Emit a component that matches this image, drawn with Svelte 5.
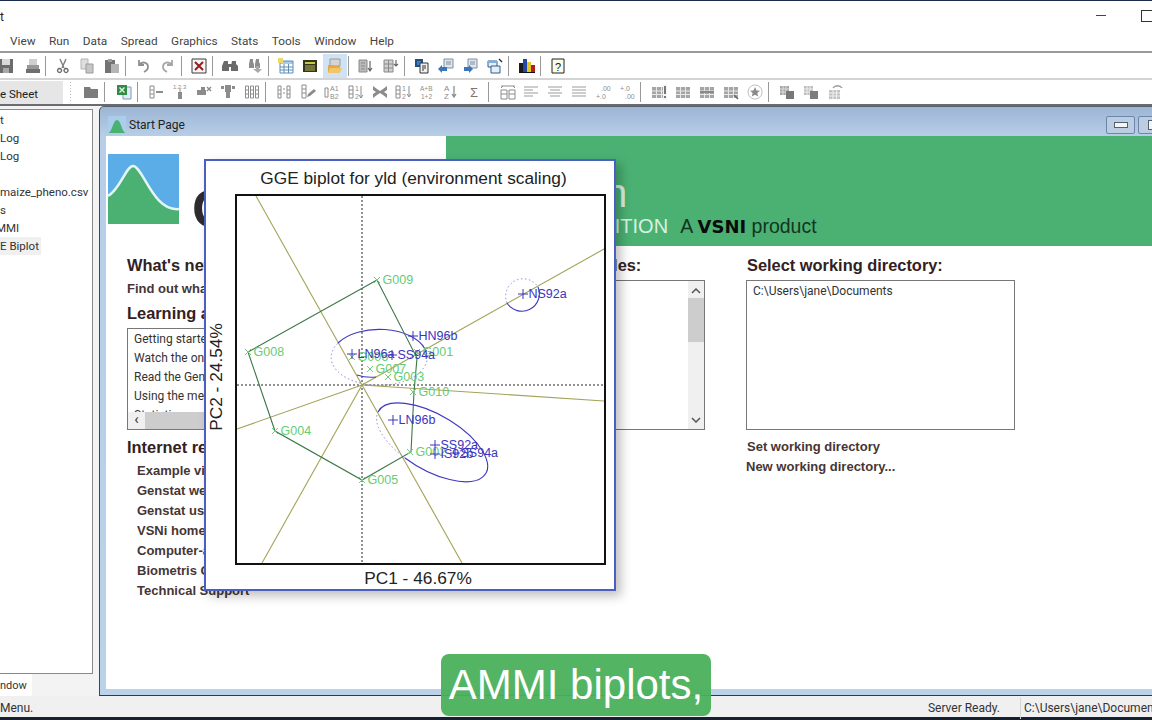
<script>
  const menus = ['View', 'Run', 'Data', 'Spread', 'Graphics', 'Stats', 'Tools', 'Window', 'Help'];
  const tree = ['t', 'Log', 'Log', '', 'maize_pheno.csv', 's', 'MMI', 'E Biplot'];
  const learning = ['Getting started', 'Watch the online videos', 'Read the Genstat guides', 'Using the menus', 'Statistics'];
  const resources = ['Example videos', 'Genstat website', 'Genstat user forum', 'VSNi home page', 'Computer-aided design', 'Biometris Genstat', 'Technical Support'];

  // little helpers for the toolbar glyphs (16x16 box)
  const f = (c, d) => ({ c, d, fill: true });
  const s = (c, d, w = 1) => ({ c, d, w });
  const t = (c, str, x, y, size) => ({ c, str, x, y, size });
  const G = '#8c8c8c';
  const L = '#bdbdbd';
  const sheet = [f('#a5a5a5', 'M1 3h14v11H1z'), s('#e8e8e8', 'M1 7h14M1 10.500h14M5.500 3v11M10.500 3v11')];

  const icons = {
    save: [f('#6c6c6c', 'M0 1h14v14H0z'), f('#d9d9d9', 'M3 1h8v6H3z'), f('#a9a9a9', 'M4 10h6v5H4z')],
    print: [f('#cfcfcf', 'M5 1h8v6H5z'), f('#979797', 'M3 7h12v5H3z'), f('#6f6f6f', 'M2 11h14v4H2z')],
    cut: [s('#7d7d7d', 'M5 1l4 9M11 1l-4 9', 1.4), s('#6a6a6a', 'M4.500 10.500a2 2 0 1 0 .1 0zM11 10.500a2 2 0 1 0 .1 0z', 1.4)],
    copy: [f('#dedede', 'M2 1h7v10H2z'), s('#b5b5b5', 'M2 1h7v10H2z'), f('#c6c6c6', 'M7 6h7v9H7z'), s('#9a9a9a', 'M7 6h7v9H7z')],
    paste: [f('#747474', 'M1 2h10v13H1z'), f('#9c9c9c', 'M4 1h4v3H4z'), f('#b5b5b5', 'M7 6h8v9H7z')],
    undo: [s('#8f8f8f', 'M4 2v5h5M4 7c3-4 9-3 9 2 0 3-2 4-4 5', 1.8)],
    redo: [s('#a5a5a5', 'M12 2v5H7M12 7C9 3 3 4 3 9c0 3 2 4 4 5', 1.8)],
    close: [f('#f6f6f6', 'M1 1h14v14H1z'), s('#3a3a3a', 'M1 1h14v14H1z'), s('#9b1b1b', 'M4 4l8 8M12 4l-8 8', 2)],
    binoc: [f('#6b6b6b', 'M2 3h4v3l1 2v5H0V8zM10 3h4v3l2 2v5H9V8zM6 6h4v3H6z')],
    findnext: [f('#8d8d8d', 'M3 1h3v3l1 2v4H2V6zM9 1h3v3l1 2v4H8V6z'), f('#a9a9a9', 'M9 8h3v3h3l-4 4-5-4h3z')],
    newsheet: [f('#fff', 'M2 3h13v12H2z'), f('#a7cbe8', 'M2 3h13v3H2z'), s('#5d8db5', 'M2 3h13v12H2zM2 9h13M2 12h13M6 6v9M10.500 6v9'), f('#ecd771', 'M0 0h5v5H0z')],
    calc: [f('#34341a', 'M1 2h14v12H1z'), f('#c7c84c', 'M3 4h10v2H3z'), s('#b5b65a', 'M3 8h10M3 10h10M3 12h10', 1)],
    open: [f('#d5d5d5', 'M3 1h10v7H3z'), s('#9a9a9a', 'M3 1h10v7H3z'), f('#e2a94a', 'M1 7h5l1 1h6v7H1z'), f('#f4c568', 'M3 10h12l-2 5H1z')],
    down1: [f('#bbb', 'M1 2h8v12H1z'), s('#8a8a8a', 'M1 2h8v12H1zM3 5h4M3 8h4M3 11h4'), s('#666', 'M12 3v10M10 10l2 3 2-3', 1.2)],
    down2: [f('#d0d0d0', 'M1 2h9v12H1z'), s('#8a8a8a', 'M1 2h9v12H1zM5.500 2v12M1 6h9M1 10h9'), s('#666', 'M13 2v6M11 6l2 2 2-2', 1.2)],
    gen: [f('#1f4f86', 'M1 1h8v8H1z'), f('#3f7fbf', 'M3 3h4v4H3z'), f('#f0f0f0', 'M6 5h8v10H6z'), s('#333', 'M6 5h8v10H6zM8 8h4M8 10h4M8 12h2')],
    back: [f('#dfe6ee', 'M6 1h9v9H6z'), s('#7e8ea0', 'M6 1h9v9H6zM8 4h5M8 6h5'), f('#3a76b8', 'M0 11l4-4v2h5v4H4v2z')],
    fwd: [f('#dfe6ee', 'M5 1h9v9H5z'), s('#7e8ea0', 'M5 1h9v9H5zM7 4h5M7 6h5'), f('#3a76b8', 'M10 11L6 7v2H1v4h5v2z')],
    windows: [f('#e6eef6', 'M1 3h9v6H1z'), s('#2c5e92', 'M1 3h9v6H1z'), f('#7fb0dd', 'M1 3h9v2H1z'), f('#e6eef6', 'M4 8h9v7H4z'), s('#2c5e92', 'M4 8h9v7H4z'), s('#222', 'M12 1l3 3', 1.2)],
    chart: [f('#1c1c1c', 'M0 5h4v10H0z'), f('#2247a8', 'M4 1h4v14H4z'), f('#e3c61e', 'M8 4h4v11H8z'), f('#b3201c', 'M12 7h4v8h-4z'), f('#111', 'M0 14h16v1H0z')],
    help: [f('#fbfbe8', 'M2 1h12v14H2z'), s('#222', 'M2 1h12v14H2z'), t('#111', '?', 5, 12.500, 11)],
    folder: [f('#7c7c7c', 'M1 3h6l1 2h7v9H1z')],
    excel: [f('#e4edf6', 'M7 3h8v12H7z'), s('#7d9ab8', 'M7 3h8v12H7z'), f('#2f8d43', 'M1 1h10v10H1z'), s('#e8f3e8', 'M3.500 3.500l5 5M8.500 3.500l-5 5', 1.4)],
    inscol: [s(G, 'M2 2h4v12H2zM2 6h4M2 10h4'), s(G, 'M8 8h7', 2)],
    numrow: [t(G, '1.2.3', 1, 5, 6), f(G, 'M6 8h4v7H6z'), s(G, 'M8 5v3')],
    delcol: [f(G, 'M1 6h9v5H1zM5 3h4v3H5z'), s(G, 'M11 3l4 4M15 3l-4 4', 1.4)],
    delrow: [f(G, 'M5 1h6v7H5zM1 2h3v3H1zM12 2h3v3h-3zM6 8h4v6H6z')],
    cols: [s(G, 'M1.500 2h3v12h-3zM6.500 2h3v12h-3zM11.500 2h3v12h-3zM1.500 6h3M6.500 6h3M11.500 6h3M1.500 10h3M6.500 10h3M11.500 10h3')],
    split: [s(G, 'M2 2h3v12H2zM11 2h3v12h-3zM2 6h3M11 6h3M2 10h3M11 10h3M7 5h2M7 9h2')],
    edit: [s(G, 'M2 1h4v13H2zM2 5h4M2 9h4'), f(G, 'M7 13l1-3 6-5 2 2-6 5z')],
    a1b2: [s(G, 'M1 4h3v9H1z'), t(G, 'A1', 6, 7, 7), t(G, 'B2', 6, 15, 7)],
    sort12: [s(G, 'M1 2h4v12H1zM1 6h4M1 10h4'), t(G, '1', 7, 7, 7), t(G, '2', 7, 15, 7), s(G, 'M13 2v12M11 11l2 3 2-3')],
    cross: [f(G, 'M1 2l4 3 3 2 3-2 4-3v4l-3 2 3 2v4l-4-3-3-2-3 2-4 3v-4l3-2-3-2z')],
    sort21: [s(G, 'M1 2h4v12H1zM1 6h4M1 10h4'), t(G, '1', 7, 7, 7), t(G, '2', 7, 15, 7), s(G, 'M14 2v10M12 10l2 3 2-3')],
    aplusb: [t(G, 'A+B', 1, 7, 6.500), t(G, '1+2', 2, 15, 6.500)],
    az: [t(G, 'A', 1, 7, 8), t(G, 'Z', 1, 15, 8), s(G, 'M11 2v11M9 10l2 3 2-3', 1.3)],
    sigma: [t('#777', 'Σ', 3, 13, 13)],
    hdr: [s(G, 'M1 2h14M1 4l2-2M15 4l-2-2'), s(G, 'M1 6h6v9H1zM9 6h6v9H9zM1 10h6M9 10h6')],
    left: [s(L, 'M1 3h14M1 6h9M1 9h14M1 12h9', 1.5)],
    center: [s(L, 'M1 3h14M3 6h10M1 9h14M3 12h10', 1.5)],
    right: [s(L, 'M1 3h14M1 6h14M1 9h14M1 12h14', 1.5)],
    decup: [t(G, '.00', 6, 7, 7), t(G, '+.0', 1, 15, 7)],
    decdown: [t(G, '+.0', 1, 7, 7), t(G, '.00', 6, 15, 7)],
    warn: [...sheet, f('#f6f6f6', 'M12 0h4v16h-4z'), f('#777', 'M13 2h2v8h-2zM13 12h2v2h-2z')],
    sheet,
    sheet2: [...sheet, f('#8a8a8a', 'M1 7h14v2H1z')],
    sheetq: [...sheet, s('#666', 'M11 11l4 4', 1.5)],
    star: [s(L, 'M8 1a7 7 0 1 0 .1 0z', 1), f('#8a8a8a', 'M8 3l1.500 3.500 3.500.3-2.700 2.300.9 3.500L8 10.700 4.800 12.600l.9-3.500L3 6.800l3.500-.3z')],
    cp1: [f('#a5a5a5', 'M1 2h9v9H1z'), s('#ddd', 'M1 5h9M1 8h9M4 2v9M7 2v9'), f('#777', 'M7 7h8v8H7z')],
    cp2: [f('#bdbdbd', 'M1 2h9v9H1z'), s('#eee', 'M1 5h9M1 8h9M4 2v9M7 2v9'), f('#7d7d7d', 'M7 7h8v8H7z')],
    cp3: [f('#c2c2c2', 'M2 6h11v9H2z'), s('#efefef', 'M2 9h11M2 12h11M6 6v9M9.500 6v9'), s('#999', 'M6 4c2-3 7-3 9 0', 1.3)]
  };

  // '|' is a separator
  const bar1 = ['save', 'print', '|', 'cut', 'copy', 'paste', '|', 'undo', 'redo', '|', 'close', '|', 'binoc', 'findnext', '|', 'newsheet', 'calc', 'open', '|', 'down1', 'down2', '|', 'gen', 'back', 'fwd', 'windows', '|', 'chart', '|', 'help'];
  const bar2 = ['folder', '|', 'excel', '|', 'inscol', 'numrow', 'delcol', 'delrow', 'cols', '|', 'split', 'edit', 'a1b2', 'sort12', 'cross', 'sort21', 'aplusb', 'az', 'sigma', '|', 'hdr', 'left', 'center', 'right', 'decup', 'decdown', '|', 'warn', 'sheet', 'sheet2', 'sheetq', 'star', '|', 'cp1', 'cp2', 'cp3'];

  // biplot, all in page coordinates
  const rays = [[256, 196], [604, 249], [604, 401], [462, 563], [262, 563], [237, 429]];
  const hull = '377,280 248,352 275,431 362,480 411,452 414,392 417,358';
  const greens = [
    ['G009', 377, 280], ['G008', 248, 352], ['G004', 275, 431], ['G005', 362, 480], ['G001', 417, 352],
    ['G006', 352, 357], ['G007', 370, 369], ['G003', 388, 377], ['G010', 413, 392], ['G002', 410, 452]
  ];
  const blues = [
    ['NS92a', 523, 294], ['HN96b', 413, 336], ['LN96a', 352, 354], ['SS94a', 392, 355],
    ['LN96b', 393, 420], ['SS92a', 435, 445], ['IS92b', 435, 454], ['SS94a', 455, 453]
  ];
</script>

{#snippet toolbar(items)}
  {#each items as name}
    {#if name === '|'}
      <span class="sep"></span>
    {:else}
      <span class="tool" class:active={name === 'open'}>
        <svg width="16" height="16" viewBox="0 0 16 16">
          {#each icons[name] as p}
            {#if p.str}
              <text x={p.x} y={p.y} font-size={p.size} fill={p.c} font-family="Liberation Sans, sans-serif">{p.str}</text>
            {:else if p.fill}
              <path d={p.d} fill={p.c} />
            {:else}
              <path d={p.d} fill="none" stroke={p.c} stroke-width={p.w} />
            {/if}
          {/each}
        </svg>
      </span>
    {/if}
  {/each}
{/snippet}

<div class="app">
  <div class="titlebar">
    <span>t</span>
    <span class="min"></span>
    <span class="max"></span>
  </div>

  <nav class="menubar">
    {#each menus as m}<span>{m}</span>{/each}
  </nav>

  <div class="bar bar1">{@render toolbar(bar1)}</div>

  <div class="bar bar2">
    <div class="sheet-tab">e Sheet</div>
    <span class="grip"></span>
    {@render toolbar(bar2)}
  </div>

  <div class="workspace">
    <aside class="side">
      <ul class="tree">
        {#each tree as item}
          <li><span class:selected={item === 'E Biplot'} class:clipped={item === 'MMI'}>{item}</span></li>
        {/each}
      </ul>
      <div class="side-tab">ndow</div>
    </aside>

    <section class="mdi">
      <header class="mdi-title">
        <svg width="18" height="18" viewBox="0 0 18 18">
          <path d="M0 0h18v18H0z" fill="#a9cdea" />
          <path d="M0 17c4 0 5-13 9-13s5 13 9 13z" fill="#4bb173" />
        </svg>
        <span>Start Page</span>
        <div class="mdi-buttons">
          <button aria-label="minimise"><i></i></button>
          <button aria-label="maximise"><i class="sq"></i></button>
        </div>
      </header>

      <div class="page">
        <div class="banner">
          <div class="brand">
            <svg width="71" height="70" viewBox="0 0 71 70">
              <path d="M0 0h71v70H0z" fill="#5aade6" />
              <path d="M0 42C12 36 18 12 25 12c10 0 20 46 46 43v15H0z" fill="#4bb173" />
              <path d="M0 42C12 36 18 12 25 12c10 0 20 46 46 43" fill="none" stroke="#e4f6f4" stroke-width="2.500" />
            </svg>
            <span class="logo-word">G</span>
          </div>
          <div class="green">
            <div class="big">n</div>
            <div class="edition">
              <span class="ed">EDITION</span>
              <span class="vsni">A <b>VSNI</b> product</span>
            </div>
          </div>
        </div>

        <div class="cols">
          <div class="col-left">
            <h2>What's new</h2>
            <a class="first" href="#new">Find out what's new</a>
            <h2 class="learn">Learning about Genstat</h2>
            <div class="listbox short">
              <ul>
                {#each learning as row}<li>{row}</li>{/each}
              </ul>
              <div class="hscroll"><span class="chev">‹</span><span class="hthumb"></span></div>
            </div>
            <h2 class="internet">Internet resources</h2>
            <div class="links">
              {#each resources as r}<a href="#r">{r}</a>{/each}
            </div>
          </div>

          <div class="col-mid">
            <h2>Select recently used files:</h2>
            <div class="listbox tall">
              <div class="vscroll">
                <svg class="up" width="10" height="6" viewBox="0 0 10 6"><path d="M1 5l4-4 4 4" fill="none" stroke="#555" stroke-width="1.500" /></svg>
                <span class="vthumb"></span>
                <svg class="down" width="10" height="6" viewBox="0 0 10 6"><path d="M1 1l4 4 4-4" fill="none" stroke="#555" stroke-width="1.500" /></svg>
              </div>
            </div>
          </div>

          <div class="col-right">
            <h2>Select working directory:</h2>
            <div class="listbox tall dir">C:\Users\jane\Documents</div>
            <div class="dir-links">
              <a href="#set">Set working directory</a>
              <a class="nudge" href="#nw">New working directory...</a>
            </div>
          </div>
        </div>
      </div>
    </section>
  </div>

  <footer class="status">
    <span>Menu.</span>
    <span class="ready">Server Ready.</span>
    <span class="path">C:\Users\jane\Documents</span>
  </footer>

  <div class="popup">
    <svg width="408" height="428" viewBox="206 161 408 428">
      <text class="lab" x="413.500" y="184" font-size="17.300" text-anchor="middle" fill="#222">GGE biplot for yld (environment scaling)</text>
      <text class="lab" x="418" y="584" font-size="17.300" text-anchor="middle" fill="#222">PC1 - 46.67%</text>
      <text class="lab" x="222" y="377" font-size="17.300" text-anchor="middle" fill="#222" transform="rotate(-90 222 377)">PC2 - 24.54%</text>

      <path d="M362 196V563M237 385H604" stroke="#222" stroke-dasharray="2 2" fill="none" />
      {#each rays as r}
        <line x1="362" y1="385" x2={r[0]} y2={r[1]} stroke="#a3a35a" stroke-width="1.100" />
      {/each}
      <polygon points={hull} fill="none" stroke="#3c7748" stroke-width="1.100" />

      <!-- concentration ellipses: solid on the far side of the ray -->
      <g fill="none" stroke="#4038c0" stroke-width="1.100">
        <path d="M507 303A17.500 17.500 0 0 0 538 287" />
        <path d="M338 343A48 28 0 0 1 425 349" />
        <path d="M357 375Q366 378 376 377" />
        <path d="M378 412A62 28 30 1 1 405 458" />
      </g>
      <g fill="none" stroke="#8e8ac8" stroke-width="1" stroke-dasharray="1.500 2.500">
        <path d="M507 303A17.500 17.500 0 0 1 538 287" />
        <path d="M425 349A48 28 0 1 1 338 343" />
        <path d="M405 458A62 28 30 0 1 378 412" />
      </g>

      {#each greens as g}
        <path d="M{g[1] - 3} {g[2] - 3}l6 6m0-6l-6 6" stroke="#6fcf7e" fill="none" />
        <text class="lab" x={g[1] + 5.500} y={g[2] + 3.500} font-size="12.500" fill="#66cc76">{g[0]}</text>
      {/each}
      {#each blues as b}
        <path d="M{b[1] - 5} {b[2]}h10m-5-5v10" stroke="#3a34be" fill="none" />
        <text class="lab" x={b[1] + 5.500} y={b[2] + 3.500} font-size="12.500" fill="#3a34be">{b[0]}</text>
      {/each}

      <rect x="236" y="195" width="369" height="369" fill="none" stroke="#111" stroke-width="2" />
    </svg>
  </div>

  <div class="caption">AMMI biplots,</div>
</div>

<style>
  :global(body) {
    margin: 0;
  }
  .app {
    position: relative;
    width: 1152px;
    height: 720px;
    overflow: hidden;
    display: flex;
    flex-direction: column;
    background: #fff;
    font-family: Roboto, "Noto Sans", sans-serif;
    font-size: 12px;
    color: #333;
  }
  .titlebar {
    height: 33px;
    flex: none;
    box-sizing: border-box;
    border-top: 1px solid #1c2b4c;
    display: flex;
    align-items: center;
    position: relative;
    color: #222;
  }
  .min {
    position: absolute;
    left: 1096px;
    top: 14px;
    width: 10px;
    height: 1px;
    background: #444;
  }
  .max {
    position: absolute;
    left: 1141px;
    top: 9px;
    width: 10px;
    height: 10px;
    border: 1px solid #333;
  }
  .menubar {
    height: 18px;
    flex: none;
    display: flex;
    padding-left: 10px;
    border-bottom: 2px solid #9a9a9a;
    font-size: 11.800px;
    line-height: 17px;
    color: #444;
  }
  .menubar span {
    margin-right: 13.500px;
  }
  .bar {
    flex: none;
    display: flex;
    align-items: center;
  }
  .bar1 {
    height: 25px;
    margin-left: -5px;
    border-bottom: 2px solid #d4d4d4;
  }
  .bar2 {
    height: 24px;
    border-bottom: 2px solid #6a6a70;
  }
  .tool {
    flex: none;
    width: 24.400px;
    height: 24px;
    display: flex;
    align-items: center;
    justify-content: center;
  }
  .bar2 .tool {
    width: 23.800px;
  }
  .tool.active {
    background: #cfe3f4;
  }
  .sep {
    flex: none;
    width: 7px;
    height: 20px;
    background: linear-gradient(#999, #999) no-repeat 1px 0 / 1px 100%;
  }
  .bar2 .sep {
    width: 9px;
  }
  .sheet-tab {
    flex: none;
    width: 63px;
    height: 23px;
    background: #e6e6e6;
    line-height: 26px;
    font-size: 11.500px;
    color: #222;
    margin-top: 1px;
  }
  .grip {
    flex: none;
    width: 16px;
    height: 22px;
    background: radial-gradient(#bbb 40%, transparent 45%) 6px 0 / 3px 3px repeat-y;
  }
  .workspace {
    flex: 1;
    min-height: 0;
    display: flex;
  }
  .side {
    flex: none;
    width: 99px;
    display: flex;
    flex-direction: column;
    background: #f3f3f3;
  }
  .tree {
    flex: 1;
    list-style: none;
    margin: 3px 6px 0 0;
    padding: 1px 0 0;
    background: #fff;
    border: 1px solid #8a8a8a;
    border-left: 0;
    overflow: hidden;
    font-size: 11.500px;
    color: #333;
  }
  .tree li {
    height: 18px;
    line-height: 18px;
  }
  .selected {
    display: inline-block;
    background: #f0f0f0;
    padding-right: 2px;
  }
  .clipped {
    display: inline-block;
    margin-left: -4px;
  }
  .side-tab {
    width: 32px;
    height: 22px;
    flex: none;
    background: #fff;
    line-height: 24px;
    font-size: 11px;
  }
  .mdi {
    flex: 1;
    min-width: 0;
    display: flex;
    flex-direction: column;
    box-sizing: border-box;
    border-left: 1px solid #3c4654;
    border-top: 1px solid #5a626c;
    border-bottom: 1px solid #2f3b46;
    border-top-left-radius: 5px;
    padding: 0 0 6px 6px;
    background: linear-gradient(#9db6d4 0, #b8cee8 30px, #bcd2e8 100%);
  }
  .mdi-title {
    height: 29px;
    flex: none;
    box-sizing: border-box;
    padding-top: 7px;
    display: flex;
    align-items: center;
    gap: 3px;
    margin-left: 2px;
    color: #222;
  }
  .mdi-buttons {
    margin-left: auto;
    display: flex;
    gap: 3px;
    width: 46px;
    overflow: hidden;
  }
  .mdi-buttons button {
    flex: none;
    width: 29px;
    height: 18px;
    padding: 0;
    background: #bccde2;
    border: 1px solid #6d86aa;
    border-radius: 2px;
    display: flex;
    align-items: center;
    justify-content: center;
  }
  .mdi-buttons i {
    width: 12px;
    height: 4px;
    background: #f5f5f5;
    border: 1px solid #4e5f76;
  }
  .mdi-buttons i.sq {
    height: 8px;
    width: 8px;
  }
  .page {
    flex: 1;
    min-height: 0;
    background: #fff;
  }
  .banner {
    height: 110px;
    display: flex;
  }
  .brand {
    width: 340px;
    flex: none;
    box-sizing: border-box;
    padding: 18px 0 0 2px;
    display: flex;
    align-items: flex-start;
  }
  .logo-word {
    font-family: "Liberation Sans", Arial, sans-serif;
    font-weight: 700;
    font-size: 54px;
    line-height: 54px;
    color: #2e2a30;
    margin: 27px 0 0 13px;
  }
  .green {
    flex: 1;
    background: #4bb173;
    padding: 34px 0 0 141px;
    font-family: "Liberation Sans", Arial, sans-serif;
  }
  .big {
    font-size: 40px;
    line-height: 46px;
    padding-left: 18px;
    color: #d7f1e1;
  }
  .edition {
    display: flex;
    align-items: center;
    height: 20px;
    font-size: 20px;
  }
  .ed {
    color: #d9f2e0;
  }
  .vsni {
    margin-left: 12px;
    font-size: 19.500px;
    color: #12351f;
  }
  .vsni b {
    font-family: "DejaVu Sans", sans-serif;
    font-size: 18px;
    color: #0b0b0b;
  }
  .cols {
    display: grid;
    grid-template-columns: 313px 265px 310px;
    padding: 9px 0 0 21px;
    font-family: "Liberation Sans", Arial, sans-serif;
  }
  .col-right {
    padding: 0 0 0 41px;
  }
  h2 {
    margin: 0;
    font-size: 16.400px;
    line-height: 20px;
    font-weight: 700;
    color: #33211f;
  }
  a {
    display: block;
    text-decoration: none;
    font-size: 13px;
    font-weight: 700;
    line-height: 20px;
    color: #463634;
  }
  .first {
    margin-top: 4px;
  }
  .learn {
    margin-top: 4px;
  }
  .listbox {
    box-sizing: border-box;
    border: 1px solid #777;
    background: #fff;
    position: relative;
    overflow: hidden;
    font-family: Roboto, sans-serif;
    font-size: 12px;
    color: #333;
  }
  .short {
    height: 102px;
    margin-top: 5px;
  }
  .short ul {
    list-style: none;
    margin: 0;
    padding: 1px 0 0 6px;
  }
  .short li {
    height: 19px;
    line-height: 19px;
  }
  .hscroll {
    position: absolute;
    left: 0;
    right: 0;
    bottom: 0;
    height: 17px;
    background: #f0f0f0;
    display: flex;
  }
  .chev {
    width: 17px;
    text-align: center;
    line-height: 14px;
    font-size: 15px;
  }
  .hthumb {
    width: 100px;
    background: #cdcdcd;
  }
  .internet {
    margin-top: 7px;
  }
  .links {
    margin: 4px 0 0 10px;
  }
  .tall {
    height: 150px;
    margin-top: 5px;
  }
  .vscroll {
    position: absolute;
    top: 0;
    right: 0;
    bottom: 0;
    width: 16px;
    background: #f0f0f0;
    display: flex;
    flex-direction: column;
    align-items: center;
  }
  .up {
    margin: 7px 0 4px;
  }
  .vthumb {
    width: 100%;
    height: 44px;
    background: #cdcdcd;
  }
  .down {
    margin-top: auto;
    margin-bottom: 6px;
  }
  .dir {
    padding: 3px 6px;
  }
  .dir-links {
    margin-top: 7px;
  }
  .col-right h2,
  .dir-links a {
    margin-left: 1px;
  }
  .dir-links a.nudge {
    margin-left: 0;
  }
  .status {
    flex: none;
    box-sizing: border-box;
    height: 24px;
    padding-top: 3px;
    display: flex;
    align-items: center;
    background: #f0f0f0;
    border-bottom: 3px solid #17202e;
    font-size: 12px;
    color: #333;
  }
  .ready {
    margin-left: auto;
  }
  .path {
    flex: none;
    width: 132px;
    box-sizing: border-box;
    margin-left: 20px;
    padding-left: 3px;
    border-left: 1px solid #d5d5d5;
    white-space: nowrap;
    overflow: hidden;
    line-height: 21px;
  }
  .popup {
    position: absolute;
    left: 204px;
    top: 159px;
    width: 408px;
    height: 428px;
    border: 2px solid #4b5fc2;
    background: #fff;
    box-shadow: 5px 5px 10px rgba(0, 0, 0, 0.25);
  }
  .popup svg {
    display: block;
  }
  .lab {
    font-family: "Liberation Sans", Arial, sans-serif;
  }
  .caption {
    position: absolute;
    left: 441px;
    top: 654px;
    width: 270px;
    height: 62px;
    border-radius: 8px;
    background: rgba(74, 176, 92, 0.95);
    color: #fff;
    font-family: "Liberation Sans", Arial, sans-serif;
    font-size: 42px;
    line-height: 62px;
    text-align: center;
  }
</style>
